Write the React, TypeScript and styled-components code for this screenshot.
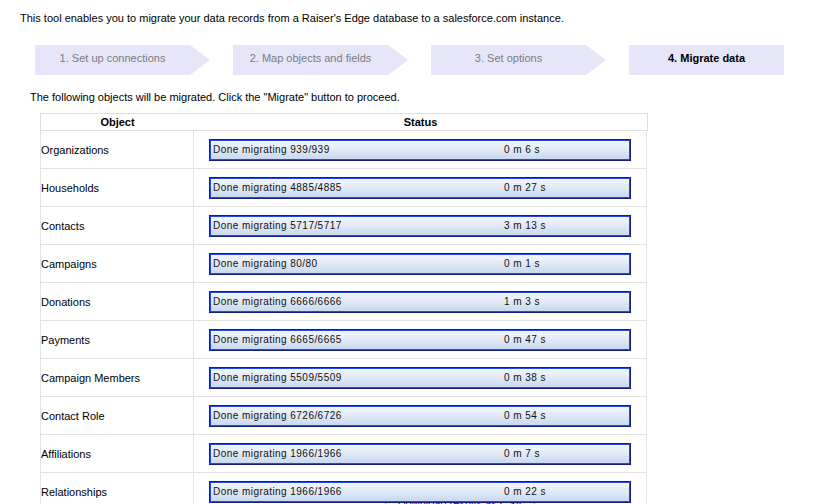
import React from 'react';
import styled, { createGlobalStyle } from 'styled-components';

const GlobalStyle = createGlobalStyle`
  html, body {
    margin: 0;
    background: #fff;
    font-family: 'Liberation Sans', Arial, sans-serif;
    font-size: 11px;
    color: #000;
  }
`;

const STEP_BG = '#e6e6f8';

const Page = styled.div`
  position: relative;
  padding: 12px 0 0 20px;
`;

const Intro = styled.p`
  margin: 0;
  line-height: 13px;
`;

const Steps = styled.div`
  display: flex;
  gap: 23px;
  margin: 20px 0 0 15px;
`;

const Step = styled.div`
  display: flex;
  height: 30px;
`;

const StepBox = styled.div<{ $active?: boolean }>`
  width: 155px;
  box-sizing: border-box;
  padding-bottom: 5px;
  display: flex;
  align-items: center;
  justify-content: center;
  background: ${STEP_BG};
  color: ${(p) => (p.$active ? '#000' : '#7c7c7c')};
  font-weight: ${(p) => (p.$active ? 'bold' : 'normal')};
`;

const StepArrow = styled.div`
  width: 0;
  height: 0;
  border-top: 15px solid transparent;
  border-bottom: 15px solid transparent;
  border-left: 20px solid ${STEP_BG};
`;

const Instruction = styled.p`
  margin: 16px 0 0 10px;
  line-height: 13px;
`;

const Table = styled.div`
  margin: 9px 0 0 20px;
  width: 608px;
`;

const HeadRow = styled.div`
  display: grid;
  grid-template-columns: 153px 1fr;
  height: 16px;
  align-items: center;
  border: 1px solid #dedede;
  font-weight: bold;
  text-align: center;
`;

const Row = styled.div`
  display: grid;
  grid-template-columns: 153px 1fr;
  height: 37px;
  width: 605px;
  border-left: 1px solid #e2e2e2;
  border-right: 1px solid #e2e2e2;
  border-bottom: 1px solid #e2e2e2;
`;

const NameCell = styled.div`
  display: flex;
  align-items: center;
  border-right: 1px solid #e2e2e2;
`;

const StatusCell = styled.div`
  display: flex;
  align-items: center;
  padding-left: 15px;
`;

const Bar = styled.div`
  position: relative;
  z-index: 1;
  box-sizing: border-box;
  width: 422px;
  height: 22px;
  display: flex;
  align-items: center;
  padding-left: 3px;
  border: 1px solid #14207e;
  box-shadow: inset 0 0 0 1px #2448f4;
  background: linear-gradient(#f6f9fd, #dde7f5 55%, #c6d7ee);
  font-size: 10px;
  letter-spacing: 0.45px;
  color: #111;
`;

const BarLabel = styled.span`
  width: 291px;
  flex: none;
`;

const DownloadButton = styled.div`
  position: absolute;
  z-index: 0;
  left: 385px;
  top: 493px;
  width: 150px;
  height: 20px;
  box-sizing: border-box;
  border: 1px solid #9a9a9a;
  background: #f3f3f3;
  display: flex;
  align-items: center;
  justify-content: center;
  color: #222;
`;

const steps = ['1. Set up connections', '2. Map objects and fields', '3. Set options', '4. Migrate data'];

const rows = [
  { name: 'Organizations', done: '939/939', time: '0 m 6 s' },
  { name: 'Households', done: '4885/4885', time: '0 m 27 s' },
  { name: 'Contacts', done: '5717/5717', time: '3 m 13 s' },
  { name: 'Campaigns', done: '80/80', time: '0 m 1 s' },
  { name: 'Donations', done: '6666/6666', time: '1 m 3 s' },
  { name: 'Payments', done: '6665/6665', time: '0 m 47 s' },
  { name: 'Campaign Members', done: '5509/5509', time: '0 m 38 s' },
  { name: 'Contact Role', done: '6726/6726', time: '0 m 54 s' },
  { name: 'Affiliations', done: '1966/1966', time: '0 m 7 s' },
  { name: 'Relationships', done: '1966/1966', time: '0 m 22 s' },
];

const App = () => {
  return (
    <Page>
      <GlobalStyle />
      <Intro>This tool enables you to migrate your data records from a Raiser's Edge database to a salesforce.com instance.</Intro>
      <Steps>
        {steps.map((label, i) => {
          const last = i === steps.length - 1;
          return (
            <Step key={label}>
              <StepBox $active={last}>{label}</StepBox>
              {!last && <StepArrow />}
            </Step>
          );
        })}
      </Steps>
      <Instruction>The following objects will be migrated. Click the "Migrate" button to proceed.</Instruction>
      <Table>
        <HeadRow>
          <span>Object</span>
          <span>Status</span>
        </HeadRow>
        {rows.map((r) => (
          <Row key={r.name}>
            <NameCell>{r.name}</NameCell>
            <StatusCell>
              <Bar>
                <BarLabel>Done migrating {r.done}</BarLabel>
                <span>{r.time}</span>
              </Bar>
            </StatusCell>
          </Row>
        ))}
      </Table>
      <DownloadButton>Download results as CSV</DownloadButton>
    </Page>
  );
};

export default App;
